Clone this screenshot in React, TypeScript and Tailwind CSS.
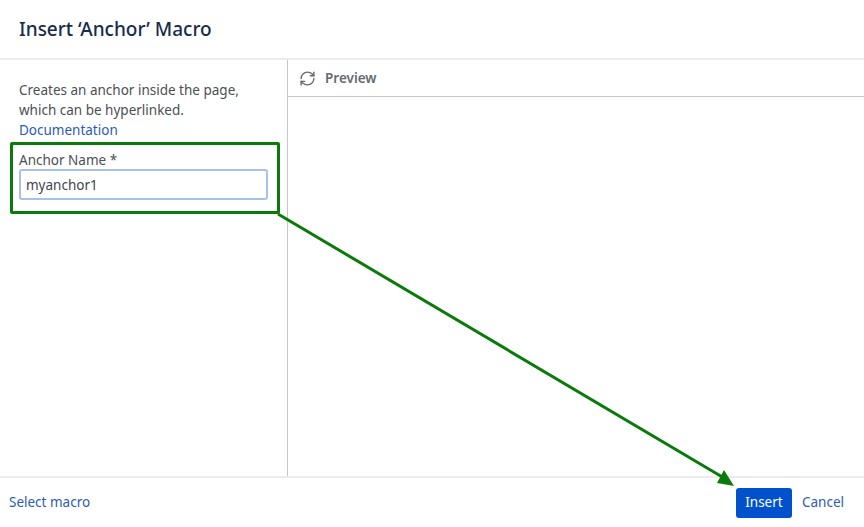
import React from 'react';
import { RefreshCw } from 'lucide-react';

export default function App() {
  return (
    <div className="relative flex h-[527px] w-[864px] flex-col overflow-hidden bg-white font-['Noto_Sans',sans-serif] text-[13.5px] text-[#42526e]">
      {/* Header */}
      <div className="flex h-[60px] shrink-0 items-center border-b-2 border-[#ebecf0] pl-[19px]">
        <h2 className="text-[19px] font-medium text-[#172b4d]">Insert ‘Anchor’ Macro</h2>
      </div>

      {/* Body */}
      <div className="flex min-h-0 flex-1">
        <div className="w-[288px] shrink-0 border-r border-[#c8c8c8] pl-[19px] pr-[20px] pt-[20px]">
          <p className="leading-[20px] text-[#4b4f56]">
            Creates an anchor inside the page,
            <br />
            which can be hyperlinked.
          </p>
          <a className="block leading-[20px] text-[#2b5cb8]">Documentation</a>
          <label className="mt-[10px] block leading-[20px] text-[#4b4f56]">Anchor Name *</label>
          <input
            readOnly
            value="myanchor1"
            className="mt-[-1px] block h-[31px] w-[249px] rounded-[3px] border-2 border-[#a6c1ea] bg-white pl-[5px] text-[13.5px] text-[#42454c] outline-none"
          />
        </div>
        <div className="flex-1">
          <div className="flex h-[37px] items-center gap-[9px] border-b border-[#c8c8c8] pl-[11px]">
            <RefreshCw className="h-[17px] w-[17px] text-[#6b6b6b]" strokeWidth={2} />
            <span className="font-semibold text-[#666a70]">Preview</span>
          </div>
        </div>
      </div>

      {/* Footer */}
      <div className="flex h-[51px] shrink-0 items-center justify-between border-t-2 border-[#ebecf0] pl-[9px] pr-[20px]">
        <a className="text-[#2b5cb8]">Select macro</a>
        <div className="flex items-center gap-[10px]">
          <button className="h-[30px] w-[56px] rounded-[3px] bg-[#0052cc] text-[13.5px] text-white">Insert</button>
          <a className="text-[#2b5cb8]">Cancel</a>
        </div>
      </div>

      {/* Annotation */}
      <div className="absolute left-[10px] top-[142px] h-[72px] w-[270px] rounded-[2px] border-[3px] border-[#0a7a0a]" />
      <svg className="absolute left-0 top-0" width="864" height="527" fill="none">
        <line x1="278" y1="214" x2="724" y2="478" stroke="#0a7a0a" strokeWidth="3" />
        <polygon points="734,486 717,483 724,470" fill="#0a7a0a" />
      </svg>
    </div>
  );
}
